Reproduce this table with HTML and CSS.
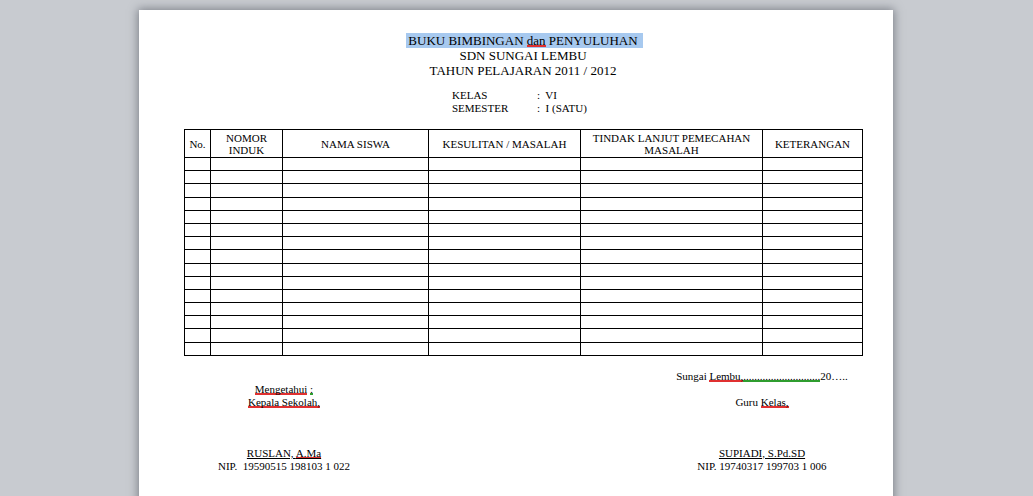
FILE: index.html
```html
<!DOCTYPE html>
<html>
<head>
<meta charset="utf-8">
<link rel="stylesheet" href="styles.css">
</head>
<body>
<div class="viewport">
  <div class="page">
    <div class="title">
      <div><span class="hl">BUKU BIMBINGAN <span class="sp-red">dan</span> PENYULUHAN</span></div>
      <div>SDN SUNGAI LEMBU</div>
      <div>TAHUN PELAJARAN 2011 / 2012</div>
    </div>

    <div class="meta">
      <span>KELAS</span><span>:&nbsp; VI</span>
      <span>SEMESTER</span><span>:&nbsp; I (SATU)</span>
    </div>

    <table class="grid">
      <colgroup>
        <col class="c-no"><col class="c-nomor"><col class="c-nama"><col class="c-kes"><col class="c-tindak"><col class="c-ket">
      </colgroup>
      <thead>
        <tr>
          <th>No.</th>
          <th>NOMOR<br>INDUK</th>
          <th>NAMA SISWA</th>
          <th>KESULITAN / MASALAH</th>
          <th>TINDAK LANJUT PEMECAHAN<br>MASALAH</th>
          <th>KETERANGAN</th>
        </tr>
      </thead>
      <tbody>
        <tr><td></td><td></td><td></td><td></td><td></td><td></td></tr>
        <tr><td></td><td></td><td></td><td></td><td></td><td></td></tr>
        <tr><td></td><td></td><td></td><td></td><td></td><td></td></tr>
        <tr><td></td><td></td><td></td><td></td><td></td><td></td></tr>
        <tr><td></td><td></td><td></td><td></td><td></td><td></td></tr>
        <tr><td></td><td></td><td></td><td></td><td></td><td></td></tr>
        <tr><td></td><td></td><td></td><td></td><td></td><td></td></tr>
        <tr><td></td><td></td><td></td><td></td><td></td><td></td></tr>
        <tr><td></td><td></td><td></td><td></td><td></td><td></td></tr>
        <tr><td></td><td></td><td></td><td></td><td></td><td></td></tr>
        <tr><td></td><td></td><td></td><td></td><td></td><td></td></tr>
        <tr><td></td><td></td><td></td><td></td><td></td><td></td></tr>
        <tr><td></td><td></td><td></td><td></td><td></td><td></td></tr>
        <tr><td></td><td></td><td></td><td></td><td></td><td></td></tr>
        <tr><td></td><td></td><td></td><td></td><td></td><td></td></tr>
      </tbody>
    </table>

    <div class="sign">
      <div class="sign-col">
        <div class="line">&nbsp;</div>
        <div class="line"><span class="sp-red">Mengetahui</span> <span class="sp-green">:</span></div>
        <div class="line"><span class="sp-red">Kepala Sekolah,</span></div>
        <div class="gap"></div>
        <div class="line"><span class="name">RUSLAN, <span class="sp-red">A.Ma</span></span></div>
        <div class="line">NIP.&nbsp; 19590515 198103 1 022</div>
      </div>
      <div class="sign-spacer"></div>
      <div class="sign-col">
        <div class="line">Sungai <span class="sp-red">Lembu,</span><span class="sp-green">............................</span>20&hellip;..</div>
        <div class="line">&nbsp;</div>
        <div class="line">Guru <span class="sp-red">Kelas,</span></div>
        <div class="gap"></div>
        <div class="line"><span class="name">SUPIADI, S.Pd.SD</span></div>
        <div class="line">NIP. 19740317 199703 1 006</div>
      </div>
    </div>
  </div>
</div>
</body>
</html>
```

FILE: styles.css
```css
html, body {
  margin: 0;
  padding: 0;
  height: 100%;
}

body {
  background: #c8cbd0;
  overflow: hidden;
  font-family: "Liberation Serif", "Times New Roman", serif;
  color: #000;
}

.viewport {
  padding-top: 10px;
}

.page {
  width: 754px;
  height: 520px;
  margin-left: 139px;
  box-sizing: border-box;
  padding: 23px 31px 0 45px;
  background: #fff;
  box-shadow: 0 0 9px 1px rgba(70, 75, 85, 0.6);
}

.title {
  text-align: center;
  font-size: 13px;
  line-height: 15px;
}

.hl {
  background: #a7c9ef;
  padding: 0 5px 0 2px;
  margin: 0 -5px 0 -2px;
}

.sp-red,
.sp-green {
  --sq: #e03030;
  background-image:
    linear-gradient(45deg, transparent 35%, var(--sq) 35%, var(--sq) 65%, transparent 65%),
    linear-gradient(-45deg, transparent 35%, var(--sq) 35%, var(--sq) 65%, transparent 65%);
  background-size: 3px 2px;
  background-repeat: repeat-x;
  background-position: 0 calc(100% - 0px);
}

.sp-green {
  --sq: #2f9d2f;
}

.hl .sp-red {
  background-position: 0 calc(100% - 1px);
}

.meta {
  margin: 11px 0 0 268px;
  display: grid;
  grid-template-columns: 85px auto;
  font-size: 11px;
  line-height: 12.5px;
}

.grid {
  margin-top: 15px;
  border-collapse: collapse;
  table-layout: fixed;
  width: 679px;
  font-size: 11px;
}

.grid th,
.grid td {
  border: 1px solid #000;
  padding: 0;
}

.grid th {
  height: 27px;
  font-weight: normal;
  line-height: 12px;
  text-align: center;
  vertical-align: middle;
}

.grid td {
  height: 12.2px;
  line-height: 0;
  font-size: 0;
}

.c-no { width: 26px; }
.c-nomor { width: 72px; }
.c-nama { width: 146px; }
.c-kes { width: 152px; }
.c-tindak { width: 182px; }
.c-ket { width: 100px; }

.sign {
  margin-top: 14px;
  display: grid;
  grid-template-columns: 200px 1fr 200px;
  font-size: 11px;
  line-height: 13px;
}

.sign-col {
  display: flex;
  flex-direction: column;
  align-items: center;
  white-space: nowrap;
}

.gap {
  height: 38px;
}

.name {
  text-decoration: underline;
  text-decoration-thickness: 1px;
  text-underline-offset: 1px;
}
```
